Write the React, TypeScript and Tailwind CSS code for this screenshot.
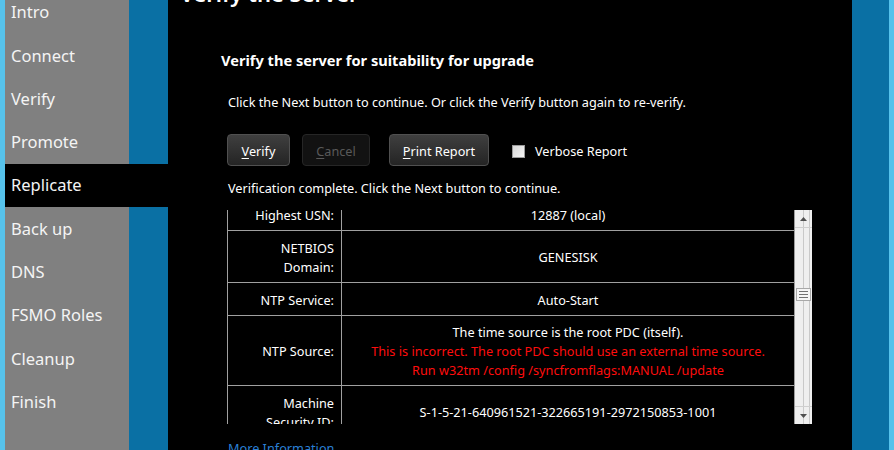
import React from "react";

const navItems = ["Intro", "Connect", "Verify", "Promote", "Replicate", "Back up", "DNS", "FSMO Roles", "Cleanup", "Finish"];

type Row = { label: string[]; value: React.ReactNode; h: string };

const rows: Row[] = [
  { label: ["Highest USN:"], value: <div>12887 (local)</div>, h: "h-[32px]" },
  { label: ["NETBIOS", "Domain:"], value: <div>GENESISK</div>, h: "h-[52px]" },
  { label: ["NTP Service:"], value: <div>Auto-Start</div>, h: "h-[33px]" },
  {
    label: ["NTP Source:"],
    value: (
      <>
        <div>The time source is the root PDC (itself).</div>
        <div className="text-[#ff0d0d]">This is incorrect. The root PDC should use an external time source.</div>
        <div className="text-[#ff0d0d]">Run w32tm /config /syncfromflags:MANUAL /update</div>
      </>
    ),
    h: "h-[70px]",
  },
  { label: ["Machine", "Security ID:"], value: <div>S-1-5-21-640961521-322665191-2972150853-1001</div>, h: "h-[52px]" },
];

function Btn({ first, rest, w, disabled }: { first: string; rest: string; w: string; disabled?: boolean }) {
  return (
    <div
      className={
        "h-[32px] rounded-[4px] border flex items-center justify-center text-[12.7px] " +
        w +
        (disabled
          ? " bg-[#121212] border-[#262626] text-[#595959]"
          : " bg-[linear-gradient(to_bottom,#3f3f3f,#242424)] border-[#505050] text-white")
      }
    >
      <span className="pt-[3px]">
        <span className="underline underline-offset-2">{first}</span>
        {rest}
      </span>
    </div>
  );
}

export default function App() {
  return (
    <div
      className="flex w-[894px] h-[450px] overflow-hidden bg-black text-white"
      style={{ fontFamily: '"Noto Sans", "Open Sans", sans-serif' }}
    >
      <div className="w-[5px] shrink-0 bg-[#56c2eb]" />
      <div className="w-[163px] shrink-0 bg-[linear-gradient(to_right,#808080_124px,#0a70a4_124px)]">
        <div className="-mt-[9px] flex flex-col">
          {navItems.map((n) => (
            <div
              key={n}
              className={
                "h-[43.3px] flex items-center pl-[6px] text-[16.5px] text-[#f4f4f4] " +
                (n === "Replicate" ? "bg-black" : "")
              }
            >
              <span>{n}</span>
            </div>
          ))}
        </div>
      </div>
      <div className="w-[684px] shrink-0 bg-black flex flex-col">
        <div className="-mt-[22px] h-[30px] leading-[30px] pl-[12px] text-[22px] font-semibold">Verify the Server</div>
        <div className="mt-[42px] h-[20px] leading-[20px] pl-[53px] text-[14.6px] font-bold">
          Verify the server for suitability for upgrade
        </div>
        <div className="mt-[23px] h-[18px] leading-[18px] pl-[60px] text-[12.7px]">
          Click the Next button to continue. Or click the Verify button again to re-verify.
        </div>
        <div className="mt-[23px] pl-[59px] flex items-center">
          <Btn first="V" rest="erify" w="w-[63px]" />
          <div className="ml-[12px]">
            <Btn first="C" rest="ancel" w="w-[68px]" disabled />
          </div>
          <div className="ml-[19px]">
            <Btn first="P" rest="rint Report" w="w-[100px]" />
          </div>
          <div className="ml-[23px] mt-[3px] w-[13px] h-[13px] border border-[#9a9a9a] bg-[linear-gradient(to_bottom_right,#d8d8d8,#f4f4f4)]" />
          <div className="ml-[10px] mt-[4px] text-[12.7px]">Verbose Report</div>
        </div>
        <div className="mt-[13px] h-[18px] leading-[18px] pl-[60px] text-[12.7px]">
          Verification complete. Click the Next button to continue.
        </div>
        <div className="mt-[13px] ml-[59px] w-[585px] h-[214px] flex">
          <div className="w-[567px] h-full overflow-hidden border-l border-[#a0a0a0]">
            <div className="-mt-[11px]">
              {rows.map((r, i) => (
                <div key={i} className={"flex border-b border-[#a0a0a0] text-[12.7px] leading-[19px] " + r.h}>
                  <div className="w-[114px] shrink-0 border-r border-[#a0a0a0] flex flex-col justify-center items-end text-right pr-[7px] pt-[2px]">
                    {r.label.map((l) => (
                      <div key={l}>{l}</div>
                    ))}
                  </div>
                  <div className="flex-1 flex flex-col justify-center items-center text-center pt-[2px]">{r.value}</div>
                </div>
              ))}
            </div>
          </div>
          <div className="relative w-[18px] h-full bg-[#efefef] border-l border-[#9c9c9c] flex flex-col">
            <div className="absolute top-0 bottom-0 left-[8px] w-px bg-[#c9c9c9]" />
            <div className="absolute top-0 bottom-0 left-[14px] w-px bg-[#c9c9c9]" />
            <div className="relative h-[18px] border-b border-[#cfcfcf] flex items-center justify-center">
              <svg width="7" height="4" viewBox="0 0 7 4">
                <path d="M0 4 L3.5 0 L7 4 Z" fill="#505050" />
              </svg>
            </div>
            <div className="relative h-[60px]" />
            <div className="relative mx-[1px] h-[13px] border border-[#a8a8a8] bg-[#f4f4f4] flex flex-col items-center justify-center gap-[2px]">
              <div className="w-[9px] h-px bg-[#707070]" />
              <div className="w-[9px] h-px bg-[#707070]" />
              <div className="w-[9px] h-px bg-[#707070]" />
            </div>
            <div className="flex-1" />
            <div className="relative h-[18px] border-t border-[#cfcfcf] flex items-center justify-center">
              <svg width="7" height="4" viewBox="0 0 7 4">
                <path d="M0 0 L3.5 4 L7 0 Z" fill="#505050" />
              </svg>
            </div>
          </div>
        </div>
        <div className="mt-[15px] h-[18px] leading-[18px] pl-[60px] text-[12.7px] text-[#2a7fd4]">More Information</div>
      </div>
      <div className="w-[37px] shrink-0 bg-[#0a70a4]" />
      <div className="w-[5px] shrink-0 bg-[#56c2eb]" />
    </div>
  );
}
